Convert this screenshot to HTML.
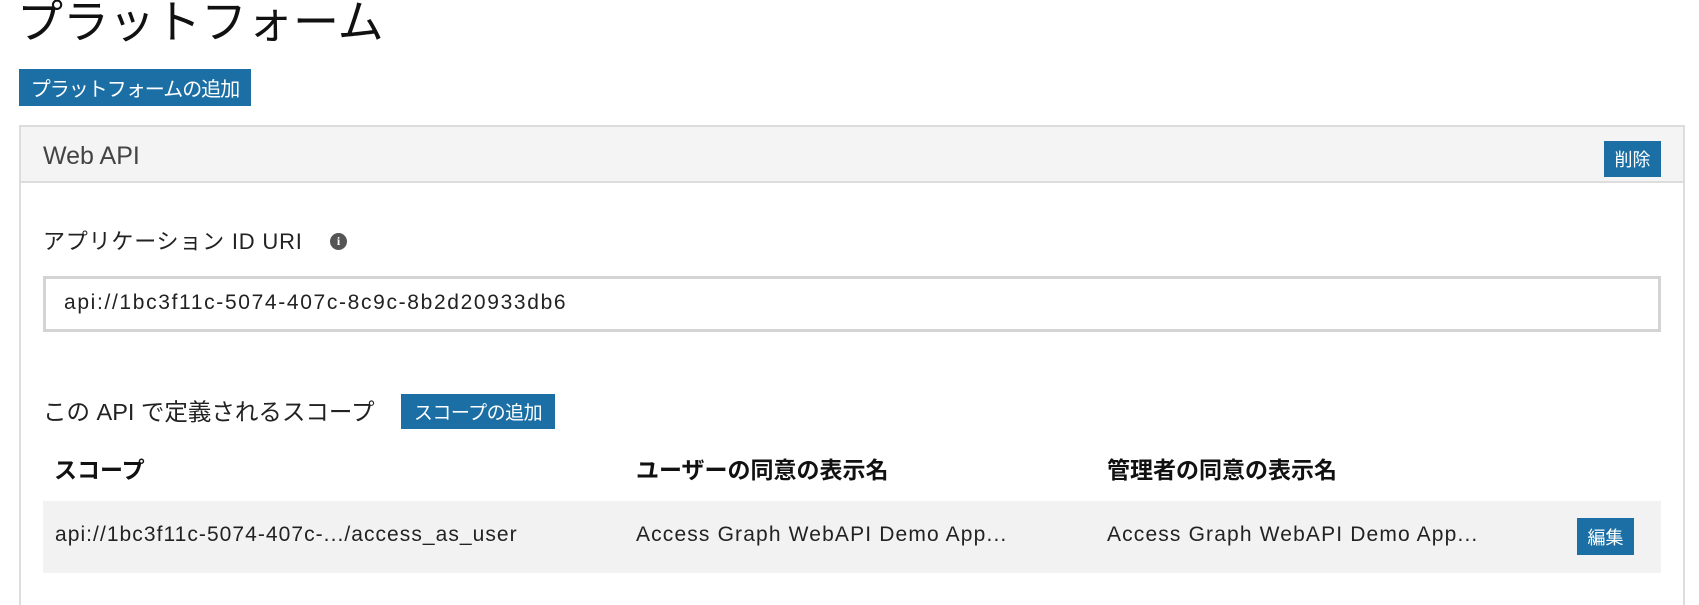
<!DOCTYPE html>
<html><head><meta charset="utf-8"><style>
*{margin:0;padding:0;box-sizing:border-box}
body{width:1699px;height:592px;overflow:hidden;background:#fff;font-family:"Liberation Sans","Noto Sans CJK JP",sans-serif;color:#222;position:relative}
.a{position:absolute;white-space:nowrap}
.btn{position:absolute;background:#1b6fa5;color:#fff;display:flex;align-items:center;justify-content:center;white-space:nowrap}
</style></head><body>
<div class="a" style="left:17px;top:-8px;font-size:46px;line-height:60px;color:#111">プラットフォーム</div>
<div class="btn" style="left:19px;top:69px;width:232px;height:37px;font-size:20px;letter-spacing:-1px">プラットフォームの追加</div>

<div class="a" style="left:19px;top:125px;width:1666px;height:480px;border:2px solid #ddd;border-bottom:none"></div>
<div class="a" style="left:21px;top:127px;width:1662px;height:56px;background:#f4f4f4;border-bottom:2px solid #ddd"></div>
<div class="a" style="left:43px;top:140px;font-size:25px;line-height:32px;color:#444">Web API</div>
<div class="btn" style="left:1604px;top:141px;width:57px;height:36px;font-size:18px">削除</div>

<div class="a" style="left:43px;top:227px;font-size:22px;line-height:30px;color:#222;letter-spacing:0.8px">アプリケーション ID URI</div>
<div class="a" style="left:330px;top:233px;width:17px;height:17px;border-radius:50%;background:#555;color:#fff;font-size:12px;font-weight:bold;text-align:center;line-height:17px;font-family:'Liberation Serif',serif">i</div>

<div class="a" style="left:43px;top:276px;width:1618px;height:56px;border:3px solid #d4d4d4;background:#fff"></div>
<div class="a" style="left:64px;top:289px;font-size:21px;line-height:28px;color:#222;letter-spacing:1.65px">api://1bc3f11c-5074-407c-8c9c-8b2d20933db6</div>

<div class="a" style="left:43px;top:397px;font-size:23.5px;line-height:30px">この API で定義されるスコープ</div>
<div class="btn" style="left:401px;top:394px;width:154px;height:35px;font-size:19px;letter-spacing:-0.5px">スコープの追加</div>

<div class="a" style="left:54px;top:455px;font-size:23px;line-height:30px;font-weight:bold;color:#111">スコープ</div>
<div class="a" style="left:636px;top:455px;font-size:23px;line-height:30px;font-weight:bold;color:#111">ユーザーの同意の表示名</div>
<div class="a" style="left:1107px;top:455px;font-size:23px;line-height:30px;font-weight:bold;color:#111">管理者の同意の表示名</div>

<div class="a" style="left:43px;top:501px;width:1618px;height:72px;background:#f2f2f2"></div>
<div class="a" style="left:55px;top:521px;font-size:21px;line-height:28px;letter-spacing:1.05px">api://1bc3f11c-5074-407c-.../access_as_user</div>
<div class="a" style="left:636px;top:521px;font-size:21px;line-height:28px;letter-spacing:1.15px">Access Graph WebAPI Demo App...</div>
<div class="a" style="left:1107px;top:521px;font-size:21px;line-height:28px;letter-spacing:1.15px">Access Graph WebAPI Demo App...</div>
<div class="btn" style="left:1577px;top:518px;width:57px;height:37px;font-size:18px">編集</div>
</body></html>
